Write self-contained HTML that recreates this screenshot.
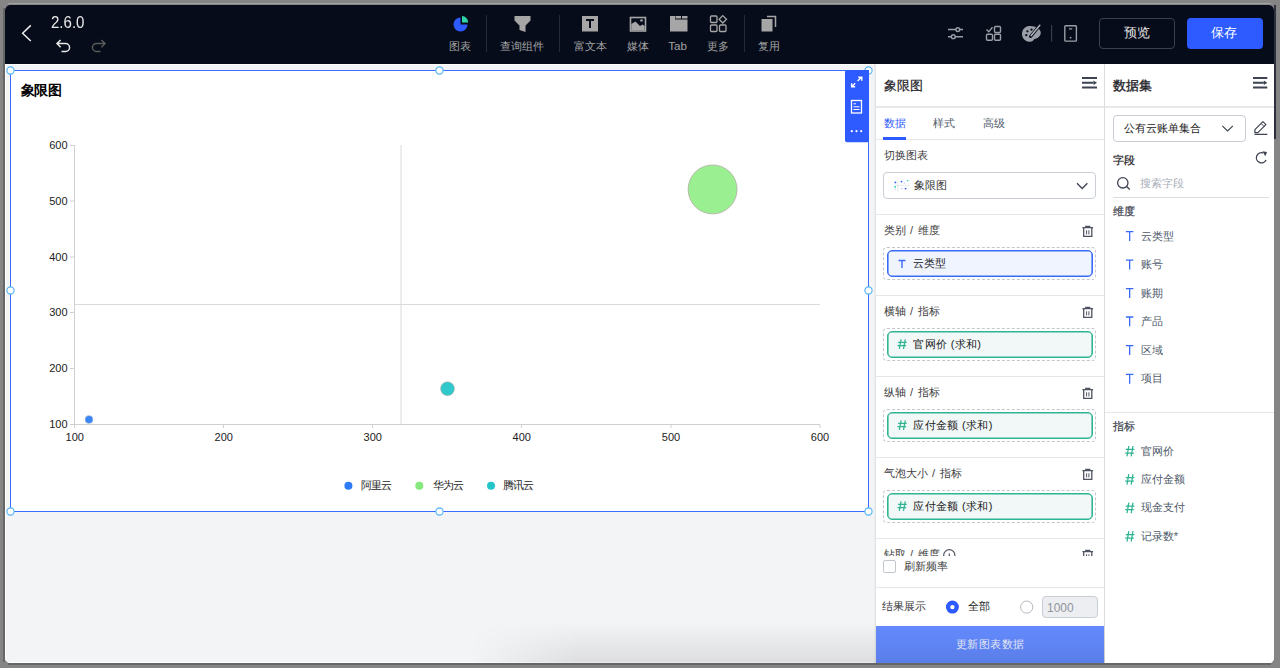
<!DOCTYPE html>
<html><head><meta charset="utf-8">
<style>
*{box-sizing:border-box;margin:0;padding:0}
html,body{width:1280px;height:668px;overflow:hidden;background:#858585;font-family:"Liberation Sans",sans-serif;color:#1f2329}
.abs{position:absolute}
.win{position:absolute;left:5px;top:5px;width:1269px;height:658px;background:#f3f4f6;border-radius:5px;overflow:hidden}
.top{position:absolute;left:0;top:0;width:1269px;height:59px;background:#060c1a}
.t{position:absolute;white-space:nowrap;line-height:1}
.tb{color:#a3a3a3;font-size:11px}
.sep{position:absolute;width:1px;background:#262a35}
.panel{position:absolute;background:#fff}
.hl{position:absolute;height:1px;background:#e6e6e6}
.vl{position:absolute;width:1px;background:#dcdcdc}
.lbl{font-size:11px;color:#3d3d3d}
.dash{position:absolute;left:8px;width:213px;height:32px;border:1px dashed #c4c7cc;border-radius:4px}
.fld{position:absolute;left:11px;width:207px;height:26px;border-radius:5px;border:1px solid #2fb593;box-shadow:inset 0 0 0 0.6px #2fb593;background:#f1f8f7}
.fld.b{border-color:#3a6bf5;box-shadow:inset 0 0 0 0.6px #3a6bf5;background:#f0f4ff}
.fi{position:absolute;font-size:12px;line-height:1}
.trash{position:absolute;left:206px}
.frow{position:absolute;left:0;width:168px;height:20px}
</style></head>
<body>
<!-- frame accents -->
<div class="abs" style="left:3px;top:8px;width:1.5px;height:654px;background:#666"></div>
<div class="abs" style="left:8px;top:663px;width:1263px;height:1.5px;background:#666"></div>
<div class="abs" style="left:8px;top:3px;width:1263px;height:1px;background:#a3a3a3"></div>
<div class="abs" style="left:1274px;top:5px;width:2px;height:134px;background:#2c303c"></div>

<div class="win">
  <div class="abs" style="left:0;top:0;width:1px;height:657px;background:#fff"></div>
  <div class="abs" style="left:0;top:657px;width:1269px;height:1px;background:#fff"></div>
  <!-- TOP BAR -->
  <div class="top">
    <svg class="abs" style="left:0;top:0" width="1269" height="59" viewBox="5 5 1269 59">
      <polyline points="30.8,25.4 22.6,33.2 30.8,41" fill="none" stroke="#f0f0f0" stroke-width="1.45"/>
      <!-- undo -->
      <path d="M57,43.6 H65.6 A3.95,3.95 0 0 1 65.6,51.5 H61.5" fill="none" stroke="#e8e8e8" stroke-width="1.5"/>
      <polyline points="60.6,40 57,43.6 60.6,47.2" fill="none" stroke="#e8e8e8" stroke-width="1.5"/>
      <!-- redo -->
      <path d="M105,43.6 H96.4 A3.95,3.95 0 0 0 96.4,51.5 H100.5" fill="none" stroke="#5a5a5a" stroke-width="1.5"/>
      <polyline points="101.4,40 105,43.6 101.4,47.2" fill="none" stroke="#5a5a5a" stroke-width="1.5"/>
      <!-- chart pie -->
      <path d="M460.5,17.5 V24.5 H467.5 A7,7 0 1 1 460.5,17.5 Z" fill="#2d5bff"/>
      <path d="M462,16 A6.5,6.5 0 0 1 468.2,22.5 H462 Z" fill="#2ed4a7"/>
      <!-- funnel -->
      <path d="M514.5,16 H530.5 V20.5 L525.5,25.5 V32 L519.5,30 V25.5 L514.5,20.5 Z" fill="#a6a6a6"/>
      <!-- rich text -->
      <rect x="582" y="16" width="16" height="15.5" fill="#a6a6a6"/>
      <path d="M586,20 H594 M590,20 V28" stroke="#060c1a" stroke-width="2"/>
      <!-- media -->
      <rect x="630.5" y="17.5" width="15" height="13.5" fill="none" stroke="#a6a6a6" stroke-width="1.6"/>
      <path d="M631.3,24 L635.5,21.5 L640,26 L642.5,24.5 L644.7,26 V30.2 H631.3 Z" fill="#a6a6a6"/>
      <circle cx="641.5" cy="20.5" r="1.3" fill="#a6a6a6"/>
      <!-- tab -->
      <path d="M670,16 H675 V19.5 H687.5 V31.5 H670 Z" fill="#a6a6a6"/>
      <rect x="675.5" y="16" width="5.5" height="2.5" fill="#a6a6a6"/>
      <rect x="682" y="16" width="5.5" height="2.5" fill="#a6a6a6"/>
      <!-- more -->
      <rect x="710.5" y="16" width="6.5" height="6.5" rx="1" fill="none" stroke="#a6a6a6" stroke-width="1.3"/>
      <rect x="710.5" y="25" width="6.5" height="6.5" rx="1" fill="none" stroke="#a6a6a6" stroke-width="1.3"/>
      <rect x="719.5" y="25" width="6.5" height="6.5" rx="1" fill="none" stroke="#a6a6a6" stroke-width="1.3"/>
      <path d="M722.8,15.6 L726.5,19.3 L722.8,23 L719.1,19.3 Z" fill="none" stroke="#a6a6a6" stroke-width="1.3"/>
      <!-- reuse -->
      <rect x="761.5" y="19" width="11" height="12.5" fill="#a6a6a6"/>
      <path d="M767,16.5 H775.5 V27" fill="none" stroke="#a6a6a6" stroke-width="1.5"/>
      <!-- right icons -->
      <path d="M948,29.6 H963 M948,36.7 H963" stroke="#9a9ea6" stroke-width="1.5"/>
      <circle cx="957.8" cy="29.6" r="1.9" fill="#060c1a" stroke="#9a9ea6" stroke-width="1.4"/>
      <circle cx="953.3" cy="36.7" r="1.9" fill="#060c1a" stroke="#9a9ea6" stroke-width="1.4"/>
      <path d="M986.5,29.5 L988.8,31.8 L992.5,27.3" fill="none" stroke="#9a9ea6" stroke-width="1.4"/>
      <rect x="994.5" y="26.5" width="6" height="6" rx="1" fill="none" stroke="#9a9ea6" stroke-width="1.4"/>
      <rect x="986.5" y="34.3" width="6" height="6" rx="1" fill="none" stroke="#9a9ea6" stroke-width="1.4"/>
      <rect x="994.5" y="34.3" width="6" height="6" rx="1" fill="none" stroke="#9a9ea6" stroke-width="1.4"/>
      <!-- palette -->
      <path d="M1029,26 C1024.5,26.5 1022,30 1022,34 C1022,38.5 1025.5,41.8 1030,41.8 C1032.5,41.8 1033.2,40.8 1034,39.6 C1034.8,38.4 1036,38.8 1037.2,38.2 C1039.5,37 1040.8,35 1040.8,32.8 C1040.8,28.8 1035.5,25.6 1029,26 Z" fill="#9a9ea6"/>
      <circle cx="1027.4" cy="31.3" r="1.15" fill="#060c1a"/>
      <circle cx="1031.5" cy="29.7" r="1.15" fill="#060c1a"/>
      <circle cx="1026.3" cy="35.2" r="1.15" fill="#060c1a"/>
      <path d="M1030.6,36.4 L1040,25" stroke="#060c1a" stroke-width="3.2" stroke-linecap="round"/>
      <path d="M1031.2,35.6 L1039.8,25.3" stroke="#b0b3ba" stroke-width="1.5" stroke-linecap="round"/>
      <rect x="1051" y="25" width="1.2" height="16.5" fill="#3a3e48"/>
      <rect x="1064.8" y="25.7" width="11.6" height="15.4" rx="0.8" fill="none" stroke="#9a9ea6" stroke-width="1.4"/>
      <path d="M1069,28.8 H1072.2" stroke="#9a9ea6" stroke-width="1.2"/>
      <circle cx="1070.6" cy="37.7" r="0.9" fill="#9a9ea6"/>
    </svg>
    <div class="t" style="left:45.5px;top:10px;font-size:16px;color:#e9e9e9;transform:scaleX(0.94);transform-origin:0 0">2.6.0</div>
    <div class="sep" style="left:481px;top:9.5px;height:37px"></div>
    <div class="sep" style="left:553.5px;top:9.5px;height:37px"></div>
    <div class="sep" style="left:738.5px;top:9.5px;height:37px"></div>
    <div class="t tb" style="left:444px;top:35.5px">图表</div>
    <div class="t tb" style="left:494.5px;top:35.5px">查询组件</div>
    <div class="t tb" style="left:569px;top:35.5px">富文本</div>
    <div class="t tb" style="left:621.5px;top:35.5px">媒体</div>
    <div class="t tb" style="left:663.3px;top:34.5px;font-size:11.6px">Tab</div>
    <div class="t tb" style="left:702px;top:35.5px">更多</div>
    <div class="t tb" style="left:752.7px;top:35.5px">复用</div>
    <div class="abs" style="left:1094px;top:13px;width:76px;height:30.5px;border:1px solid #3b404b;border-radius:4px"></div>
    <div class="t" style="left:1118.5px;top:20.5px;font-size:13px;color:#e3e3e3">预览</div>
    <div class="abs" style="left:1182px;top:13px;width:76px;height:30.5px;background:#2d5bff;border-radius:4px"></div>
    <div class="t" style="left:1206px;top:20.5px;font-size:13px;color:#fff">保存</div>
  </div>
  <div class="abs" style="left:0;top:59px;width:870px;height:1px;background:#fff"></div>

  <!-- CHART CARD (coords relative to win: subtract 5) -->
  <div class="abs" style="left:5px;top:65px;width:858px;height:441px;background:#fff"></div>
  <div class="t" style="left:15.5px;top:78px;font-size:14px;font-weight:700;letter-spacing:-0.5px;color:#000">象限图</div>
  <svg class="abs" style="left:0;top:0" width="870" height="657" viewBox="5 5 870 657">
    <g stroke="#d0d0d0" stroke-width="1" fill="none">
      <path d="M74.5,145 V428 M70,145.5 H74.5 M70,201 H74.5 M70,257 H74.5 M70,312.5 H74.5 M70,368.5 H74.5 M70,424.5 H820"/>
      <path d="M223.5,424.5 V428 M372.5,424.5 V428 M521.5,424.5 V428 M671,424.5 V428 M820,424.5 V428"/>
    </g>
    <path d="M401,145 V424 M74.5,304.5 H820" stroke="#dadada" stroke-width="1"/>
    <g font-family="Liberation Sans" font-size="11" fill="#222" text-anchor="end">
      <text x="67.5" y="148.8">600</text>
      <text x="67.5" y="204.6">500</text>
      <text x="67.5" y="260.5">400</text>
      <text x="67.5" y="316.3">300</text>
      <text x="67.5" y="372.2">200</text>
      <text x="67.5" y="428">100</text>
    </g>
    <g font-family="Liberation Sans" font-size="11" fill="#222" text-anchor="middle">
      <text x="74.8" y="440.8">100</text>
      <text x="223.8" y="440.8">200</text>
      <text x="372.8" y="440.8">300</text>
      <text x="521.8" y="440.8">400</text>
      <text x="671" y="440.8">500</text>
      <text x="820" y="440.8">600</text>
    </g>
    <circle cx="89" cy="419.5" r="4" fill="#3a86f7" stroke="#e8d8c0" stroke-width="0.4"/>
    <circle cx="447.5" cy="388.7" r="7" fill="#30c9cb" stroke="#d8a8a8" stroke-width="0.5"/>
    <circle cx="712.6" cy="189.4" r="24.5" fill="#9af090" stroke="#b6a0a8" stroke-width="0.7"/>
    <circle cx="348.4" cy="485.8" r="4" fill="#2f7bf8"/>
    <circle cx="419.3" cy="485.8" r="4" fill="#86e87c"/>
    <circle cx="491" cy="485.8" r="4" fill="#23c6c9"/>
    <!-- selection frame -->
    <rect x="10.5" y="70.5" width="858" height="441" fill="none" stroke="#3c6cff" stroke-width="1"/>
    <g fill="#fff" stroke="#57b6f5" stroke-width="1.2">
      <circle cx="10.5" cy="70.5" r="3.6"/><circle cx="439.5" cy="70.5" r="3.6"/><circle cx="868.5" cy="70.5" r="3.6"/>
      <circle cx="10.5" cy="290.5" r="3.6"/><circle cx="868.5" cy="290.5" r="3.6"/>
      <circle cx="10.5" cy="511.5" r="3.6"/><circle cx="439.5" cy="511.5" r="3.6"/><circle cx="868.5" cy="511.5" r="3.6"/>
    </g>
    <!-- chart toolbar -->
    <path d="M847,70 H869 V140.3 A2,2 0 0 1 867,142.3 H847 A2,2 0 0 1 845,140.3 V72 A2,2 0 0 1 847,70 Z" fill="#2d5bff"/>
    <g stroke="#fff" stroke-width="1.4" fill="none">
      <path d="M857.6,81 L861.6,77 M858.3,77.3 H861.8 V80.8"/>
      <path d="M855.2,83.3 L851.4,87.1 M851.6,83.2 V86.8 H855.2"/>
    </g>
    <rect x="851.5" y="100.5" width="10" height="12.5" fill="none" stroke="#fff" stroke-width="1.3"/>
    <path d="M853.5,103.8 H856 M853.5,106.8 H859.5 M853.5,109.5 H859.5" stroke="#fff" stroke-width="1"/>
    <circle cx="851.8" cy="131.2" r="1.1" fill="#fff"/><circle cx="856.5" cy="131.2" r="1.1" fill="#fff"/><circle cx="861.2" cy="131.2" r="1.1" fill="#fff"/>
  </svg>
  <div class="t" style="left:355.5px;top:475px;font-size:11px;letter-spacing:-0.9px;color:#222">阿里云</div>
  <div class="t" style="left:427.5px;top:475px;font-size:11px;letter-spacing:-0.9px;color:#222">华为云</div>
  <div class="t" style="left:498px;top:475px;font-size:11px;letter-spacing:-0.9px;color:#222">腾讯云</div>

  <!-- PANELS (page coords) -->
  <div class="pg" style="position:absolute;left:-5px;top:-5px;width:1280px;height:668px">
  <!-- PANEL 1 -->
  <div class="panel" style="left:875px;top:64px;width:230px;height:600px"></div>
  <div class="vl" style="left:873.5px;top:64px;width:2.5px;height:600px;background:linear-gradient(to right,#eef0f2,#e0e1e3)"></div>
  <div class="vl" style="left:1104px;top:64px;height:600px"></div>
  <div class="t" style="left:884px;top:78.7px;font-size:13px;color:#1f2329;-webkit-text-stroke:0.2px #1f2329">象限图</div>
  <svg class="abs" style="left:1080px;top:74px" width="20" height="18" viewBox="1080 74 20 18">
    <path d="M1082,78 H1097 M1082,82.7 H1093.5 M1082,87.5 H1097" stroke="#3d4350" stroke-width="2"/>
    <path d="M1093.5,80.5 L1097,82.7 L1093.5,85 Z" fill="#3d4350"/>
  </svg>
  <div class="hl" style="left:876px;top:106px;width:228px;height:2px;background:#e8e8e8"></div>
  <div class="t" style="left:883.5px;top:117.5px;font-size:11px;color:#2d5bff">数据</div>
  <div class="t" style="left:933px;top:117.5px;font-size:11px;color:#4e5969">样式</div>
  <div class="t" style="left:982.5px;top:117.5px;font-size:11px;color:#4e5969">高级</div>
  <div class="hl" style="left:876px;top:139px;width:228px"></div>
  <div class="abs" style="left:883px;top:137px;width:23px;height:3px;background:#2d5bff"></div>
  <div class="t lbl" style="left:883.5px;top:150.2px">切换图表</div>
  <div class="abs" style="left:883px;top:172px;width:213px;height:27px;border:1px solid #c9cdd4;border-radius:4px"></div>
  <svg class="abs" style="left:890px;top:176px" width="24" height="18" viewBox="890 176 24 18">
    <path d="M897.9,179.2 V191.5 M893.6,185.3 H909.7" stroke="#e6e8eb" stroke-width="1"/>
    <circle cx="895.4" cy="182.4" r="0.9" fill="#2d5bff"/><circle cx="901.5" cy="181.6" r="0.9" fill="#2d5bff"/>
    <circle cx="904.3" cy="182.9" r="0.5" fill="#8aa4ff"/><path d="M906.6,180 H908.6 L907.6,181.8 Z" fill="#2ed4a7"/>
    <circle cx="895.1" cy="187" r="0.9" fill="#2ed4a7"/><circle cx="895.1" cy="189.4" r="0.5" fill="#9ab0ff"/>
    <circle cx="901.9" cy="188.6" r="0.6" fill="#8aa4ff"/><circle cx="905.6" cy="188.6" r="0.9" fill="#2d5bff"/>
  </svg>
  <div class="t lbl" style="left:913.8px;top:180px;color:#333">象限图</div>
  <svg class="abs" style="left:1074px;top:180px" width="16" height="12" viewBox="1074 180 16 12">
    <polyline points="1077,183.3 1082.2,188.5 1087.4,183.3" fill="none" stroke="#3d4350" stroke-width="1.3"/>
  </svg>
  <div class="hl" style="left:876px;top:214px;width:228px"></div>
  <div class="t lbl" style="left:883.5px;top:224.9px;word-spacing:1.5px">类别 / 维度</div>
  <svg class="abs" style="left:1080px;top:223.5px" width="16" height="16" viewBox="1080 223.5 16 16">
    <path d="M1082.4,227.2 H1093.1 M1085.8,227.2 V225.9 H1089.7 V227.2" fill="none" stroke="#4e5360" stroke-width="1.3"/>
    <path d="M1083.7,227.5 V235.9 H1091.8 V227.5" fill="none" stroke="#4e5360" stroke-width="1.3"/>
    <path d="M1086.6,229.8 V233.9 M1088.9,229.8 V233.9" stroke="#4e5360" stroke-width="1"/>
  </svg>
  <div class="abs" style="left:883.3px;top:247.0px;width:213px;height:32.5px;border:1px dashed #c4c7cc;border-radius:4px"></div>
  <div class="abs fld b" style="left:887px;top:249.8px;width:206px;height:27.4px"></div>
  <svg class="abs" style="left:895px;top:256.5px" width="14" height="14" viewBox="895 256.5 14 14"><path d="M898.5,260.0 H905.5 M902.0,260.0 V267.6" stroke="#3a6bf5" stroke-width="1.4" fill="none"/></svg>
  <div class="t lbl" style="left:913.2px;top:258.0px;color:#222">云类型</div>
  <div class="hl" style="left:876px;top:295.0px;width:228px"></div>
  <div class="t lbl" style="left:883.5px;top:305.9px;word-spacing:1.5px">横轴 / 指标</div>
  <svg class="abs" style="left:1080px;top:304.5px" width="16" height="16" viewBox="1080 304.5 16 16">
    <path d="M1082.4,308.2 H1093.1 M1085.8,308.2 V306.9 H1089.7 V308.2" fill="none" stroke="#4e5360" stroke-width="1.3"/>
    <path d="M1083.7,308.5 V316.9 H1091.8 V308.5" fill="none" stroke="#4e5360" stroke-width="1.3"/>
    <path d="M1086.6,310.8 V314.9 M1088.9,310.8 V314.9" stroke="#4e5360" stroke-width="1"/>
  </svg>
  <div class="abs" style="left:883.3px;top:328.0px;width:213px;height:32.5px;border:1px dashed #c4c7cc;border-radius:4px"></div>
  <div class="abs fld" style="left:887px;top:330.8px;width:206px;height:27.4px"></div>
  <svg class="abs" style="left:895px;top:336.5px" width="14" height="14" viewBox="895 336.5 14 14"><path d="M901.1,338.8 L899.3,348.3 M905.3,338.8 L903.5,348.3 M898.1,341.9 H906.7 M897.5,345.2 H906.1" stroke="#2fb593" stroke-width="1.25" fill="none"/></svg>
  <div class="t lbl" style="left:913.2px;top:339.0px;color:#222;letter-spacing:0.35px">官网价 (求和)</div>
  <div class="hl" style="left:876px;top:376.0px;width:228px"></div>
  <div class="t lbl" style="left:883.5px;top:386.9px;word-spacing:1.5px">纵轴 / 指标</div>
  <svg class="abs" style="left:1080px;top:385.5px" width="16" height="16" viewBox="1080 385.5 16 16">
    <path d="M1082.4,389.2 H1093.1 M1085.8,389.2 V387.9 H1089.7 V389.2" fill="none" stroke="#4e5360" stroke-width="1.3"/>
    <path d="M1083.7,389.5 V397.9 H1091.8 V389.5" fill="none" stroke="#4e5360" stroke-width="1.3"/>
    <path d="M1086.6,391.8 V395.9 M1088.9,391.8 V395.9" stroke="#4e5360" stroke-width="1"/>
  </svg>
  <div class="abs" style="left:883.3px;top:409.0px;width:213px;height:32.5px;border:1px dashed #c4c7cc;border-radius:4px"></div>
  <div class="abs fld" style="left:887px;top:411.8px;width:206px;height:27.4px"></div>
  <svg class="abs" style="left:895px;top:417.5px" width="14" height="14" viewBox="895 417.5 14 14"><path d="M901.1,419.8 L899.3,429.3 M905.3,419.8 L903.5,429.3 M898.1,422.9 H906.7 M897.5,426.2 H906.1" stroke="#2fb593" stroke-width="1.25" fill="none"/></svg>
  <div class="t lbl" style="left:913.2px;top:420.0px;color:#222;letter-spacing:0.35px">应付金额 (求和)</div>
  <div class="hl" style="left:876px;top:457.0px;width:228px"></div>
  <div class="t lbl" style="left:883.5px;top:467.9px;word-spacing:1.5px">气泡大小 / 指标</div>
  <svg class="abs" style="left:1080px;top:466.5px" width="16" height="16" viewBox="1080 466.5 16 16">
    <path d="M1082.4,470.2 H1093.1 M1085.8,470.2 V468.9 H1089.7 V470.2" fill="none" stroke="#4e5360" stroke-width="1.3"/>
    <path d="M1083.7,470.5 V478.9 H1091.8 V470.5" fill="none" stroke="#4e5360" stroke-width="1.3"/>
    <path d="M1086.6,472.8 V476.9 M1088.9,472.8 V476.9" stroke="#4e5360" stroke-width="1"/>
  </svg>
  <div class="abs" style="left:883.3px;top:490.0px;width:213px;height:32.5px;border:1px dashed #c4c7cc;border-radius:4px"></div>
  <div class="abs fld" style="left:887px;top:492.8px;width:206px;height:27.4px"></div>
  <svg class="abs" style="left:895px;top:498.5px" width="14" height="14" viewBox="895 498.5 14 14"><path d="M901.1,500.8 L899.3,510.3 M905.3,500.8 L903.5,510.3 M898.1,503.9 H906.7 M897.5,507.2 H906.1" stroke="#2fb593" stroke-width="1.25" fill="none"/></svg>
  <div class="t lbl" style="left:913.2px;top:501.0px;color:#222;letter-spacing:0.35px">应付金额 (求和)</div>
  <div class="hl" style="left:876px;top:538.0px;width:228px"></div>
  <div class="abs" style="left:876px;top:538.5px;width:228px;height:17.5px;overflow:hidden"><div class="t lbl" style="left:7.5px;top:10px;word-spacing:1.5px">钻取 / 维度</div><svg class="abs" style="left:66px;top:8px" width="16" height="16" viewBox="0 0 16 16"><circle cx="7.3" cy="8.3" r="5.6" fill="none" stroke="#4e5360" stroke-width="1.2"/><path d="M7.3,6.5 V10.5" stroke="#4e5360" stroke-width="1.2"/></svg></div>
  <div class="abs" style="left:876px;top:538.5px;width:228px;height:17.5px;overflow:hidden"><svg class="abs" style="left:204px;top:9px" width="16" height="16" viewBox="1080 9 16 16">
    <path d="M1082.4,12.7 H1093.1 M1085.8,12.7 V11.4 H1089.7 V12.7" fill="none" stroke="#4e5360" stroke-width="1.3"/>
    <path d="M1083.7,13 V21.4 H1091.8 V13" fill="none" stroke="#4e5360" stroke-width="1.3"/>
    <path d="M1086.6,15.3 V19.4 M1088.9,15.3 V19.4" stroke="#4e5360" stroke-width="1"/>
  </svg></div>
  <!-- bottom controls -->
  <div class="abs" style="left:876px;top:556px;width:228px;height:108px;background:#fff"></div>
  <div class="abs" style="left:883px;top:560.3px;width:13px;height:13px;border:1px solid #c2c6cd;border-radius:2px"></div>
  <div class="t lbl" style="left:904px;top:561px">刷新频率</div>
  <div class="hl" style="left:876px;top:587px;width:228px"></div>
  <div class="t lbl" style="left:882px;top:601px">结果展示</div>
  <svg class="abs" style="left:940px;top:595px" width="165" height="26" viewBox="940 595 165 26">
    <circle cx="952.4" cy="607.1" r="4.35" fill="#fff" stroke="#2d5bff" stroke-width="4.3"/>
    <circle cx="1026.7" cy="607.1" r="6.1" fill="#fff" stroke="#b5b9c0" stroke-width="1"/>
  </svg>
  <div class="t lbl" style="left:967.5px;top:601px;color:#222">全部</div>
  <div class="abs" style="left:1041.5px;top:596.3px;width:56.5px;height:22px;border:1px solid #c9cdd4;border-radius:4px;background:#eceef1"></div>
  <div class="t" style="left:1047px;top:601.8px;font-size:12px;color:#90949b">1000</div>
  <div class="abs" style="left:876px;top:626px;width:228px;height:37px;background:#648bff"></div>
  <div class="t" style="left:955.8px;top:639px;font-size:11px;letter-spacing:0.5px;color:#eef2ff">更新图表数据</div>
  <div class="abs" style="left:470px;top:622px;width:804px;height:42px;background:linear-gradient(to bottom,rgba(0,0,0,0),rgba(0,0,0,0.09));-webkit-mask-image:linear-gradient(to right,transparent,#000 110px)"></div>

  <!-- PANEL 2 -->
  <div class="panel" style="left:1105px;top:64px;width:169px;height:600px"></div>
  <div class="t" style="left:1113px;top:78.7px;font-size:13px;color:#1f2329;-webkit-text-stroke:0.35px #1f2329">数据集</div>
  <svg class="abs" style="left:1250px;top:74px" width="20" height="18" viewBox="1250 74 20 18">
    <path d="M1253,78 H1267.3 M1253,82.7 H1263.8 M1253,87.5 H1267.3" stroke="#3d4350" stroke-width="2"/>
    <path d="M1263.8,80.5 L1267.3,82.7 L1263.8,85 Z" fill="#3d4350"/>
  </svg>
  <div class="hl" style="left:1105px;top:106px;width:169px;height:2px;background:#e8e8e8"></div>
  <div class="abs" style="left:1112.5px;top:115px;width:133.5px;height:26.5px;border:1px solid #c9cdd4;border-radius:4px"></div>
  <div class="t lbl" style="left:1124px;top:122.5px;color:#222">公有云账单集合</div>
  <svg class="abs" style="left:1218px;top:118px" width="52" height="20" viewBox="1218 118 52 20">
    <polyline points="1222.3,125.9 1227.6,131 1232.9,125.9" fill="none" stroke="#3d4350" stroke-width="1.15"/>
    <path d="M1254.9,129.7 L1262.9,121.7 L1265.9,124.7 L1257.9,132.7 L1254.9,132.7 Z" fill="none" stroke="#3d4350" stroke-width="1.2" stroke-linejoin="round"/>
    <path d="M1261.1,123.5 L1264.1,126.5" stroke="#3d4350" stroke-width="1"/>
    <path d="M1254.5,134.3 H1267.3" stroke="#3d4350" stroke-width="1.3"/>
  </svg>
  <div class="t lbl" style="left:1113px;top:154.5px;color:#1f2329;-webkit-text-stroke:0.25px #1f2329">字段</div>
  <svg class="abs" style="left:1250px;top:148px" width="22" height="20" viewBox="1250 148 22 20">
    <path d="M1266.1,160 A5.1,5.1 0 1 1 1263.2,152.9" fill="none" stroke="#3d4350" stroke-width="1.3"/>
    <path d="M1262.4,151.3 L1267,151.9 L1265.3,156.2 Z" fill="#3d4350"/>
  </svg>
  <svg class="abs" style="left:1114px;top:174px" width="20" height="18" viewBox="1114 174 20 18">
    <circle cx="1122.8" cy="182.8" r="5.2" fill="none" stroke="#3d4350" stroke-width="1.3"/>
    <path d="M1126.6,186.6 L1129.8,189.6" stroke="#3d4350" stroke-width="1.4"/>
  </svg>
  <div class="t lbl" style="left:1140px;top:178px;color:#a9aeb8">搜索字段</div>
  <div class="hl" style="left:1112.5px;top:197px;width:156px;background:#dcdee3"></div>
  <div class="t lbl" style="left:1113px;top:205.5px;color:#3d4350;-webkit-text-stroke:0.2px #3d4350">维度</div>
  <div class="t lbl" style="left:1140.7px;top:230.5px;color:#4e5969">云类型</div>
  <div class="t lbl" style="left:1140.7px;top:259.0px;color:#4e5969">账号</div>
  <div class="t lbl" style="left:1140.7px;top:287.5px;color:#4e5969">账期</div>
  <div class="t lbl" style="left:1140.7px;top:315.8px;color:#4e5969">产品</div>
  <div class="t lbl" style="left:1140.7px;top:344.5px;color:#4e5969">区域</div>
  <div class="t lbl" style="left:1140.7px;top:373.2px;color:#4e5969">项目</div>
  <svg class="abs" style="left:1120px;top:225px" width="20" height="165" viewBox="1120 225 20 165"><path d="M1125.9,231.7 H1133.4 M1129.65,231.7 V241.0" stroke="#3a6bf5" stroke-width="1.3" fill="none"/><path d="M1125.9,260.2 H1133.4 M1129.65,260.2 V269.5" stroke="#3a6bf5" stroke-width="1.3" fill="none"/><path d="M1125.9,288.7 H1133.4 M1129.65,288.7 V298.0" stroke="#3a6bf5" stroke-width="1.3" fill="none"/><path d="M1125.9,317.0 H1133.4 M1129.65,317.0 V326.3" stroke="#3a6bf5" stroke-width="1.3" fill="none"/><path d="M1125.9,345.7 H1133.4 M1129.65,345.7 V355.0" stroke="#3a6bf5" stroke-width="1.3" fill="none"/><path d="M1125.9,374.4 H1133.4 M1129.65,374.4 V383.7" stroke="#3a6bf5" stroke-width="1.3" fill="none"/></svg>
  <div class="hl" style="left:1105px;top:412px;width:169px"></div>
  <div class="t lbl" style="left:1113px;top:420.5px;color:#3d4350;-webkit-text-stroke:0.2px #3d4350">指标</div>
  <div class="t lbl" style="left:1140.8px;top:445.7px;color:#4e5969">官网价</div>
  <div class="t lbl" style="left:1140.8px;top:473.9px;color:#4e5969">应付金额</div>
  <div class="t lbl" style="left:1140.8px;top:502.4px;color:#4e5969">现金支付</div>
  <div class="t lbl" style="left:1140.8px;top:530.9px;color:#4e5969">记录数*</div>
  <svg class="abs" style="left:1120px;top:440px" width="20" height="110" viewBox="1120 440 20 110"><path d="M1128.8,446.0 L1127.0,456.4 M1133.0,446.0 L1131.2,456.4 M1125.8,449.4 H1134.4 M1125.2,453.0 H1133.8" stroke="#2fb593" stroke-width="1.25" fill="none"/><path d="M1128.8,474.2 L1127.0,484.6 M1133.0,474.2 L1131.2,484.6 M1125.8,477.6 H1134.4 M1125.2,481.2 H1133.8" stroke="#2fb593" stroke-width="1.25" fill="none"/><path d="M1128.8,502.7 L1127.0,513.1 M1133.0,502.7 L1131.2,513.1 M1125.8,506.1 H1134.4 M1125.2,509.7 H1133.8" stroke="#2fb593" stroke-width="1.25" fill="none"/><path d="M1128.8,531.2 L1127.0,541.6 M1133.0,531.2 L1131.2,541.6 M1125.8,534.6 H1134.4 M1125.2,538.2 H1133.8" stroke="#2fb593" stroke-width="1.25" fill="none"/></svg>
  </div>
</div>
</body></html>
